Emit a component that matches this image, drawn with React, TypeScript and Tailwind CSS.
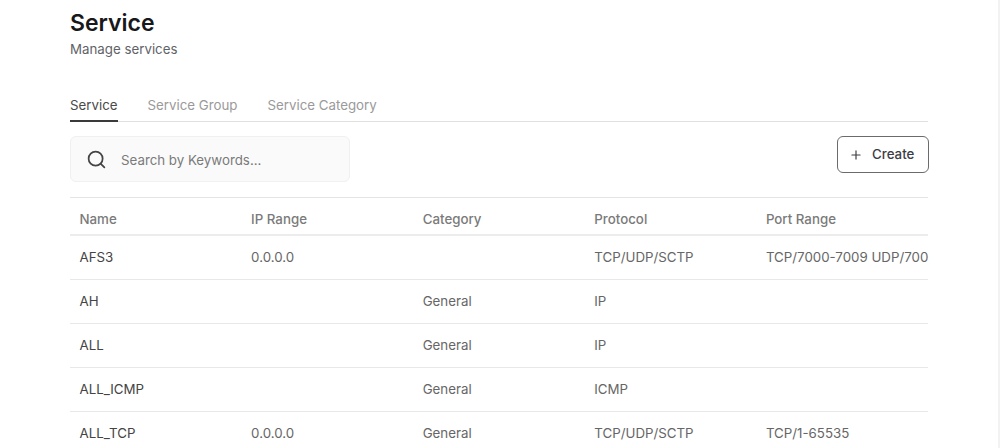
import React from 'react';
import { Plus, Search } from 'lucide-react';

const rows = [
  { name: 'AFS3', ip: '0.0.0.0', category: '', protocol: 'TCP/UDP/SCTP', port: 'TCP/7000-7009 UDP/700' },
  { name: 'AH', ip: '', category: 'General', protocol: 'IP', port: '' },
  { name: 'ALL', ip: '', category: 'General', protocol: 'IP', port: '' },
  { name: 'ALL_ICMP', ip: '', category: 'General', protocol: 'ICMP', port: '' },
  { name: 'ALL_TCP', ip: '0.0.0.0', category: 'General', protocol: 'TCP/UDP/SCTP', port: 'TCP/1-65535' },
];

const App = () => {
  return (
    <div className="h-[448px] w-[1000px] overflow-hidden bg-white font-['Inter',sans-serif]">
      <div className="flex h-full">
        <div className="w-[998px] pl-[70px] pr-[70px] pt-[8px]">
          {/* Header */}
          <h1 className="text-[23px] leading-[30px] font-semibold text-[#18181b]">Service</h1>
          <p className="mt-[2px] text-[13.3px] leading-[18px] text-[#5f6368]">Manage services</p>

          {/* Tabs */}
          <div className="mt-[35px] flex gap-[30px] border-b border-[#e0e0e0] text-[13.3px]">
            <div className="-mb-px h-[29px] border-b-2 border-[#3a3a3a] pt-[3px] leading-[18px] text-[#4a4a4a]">Service</div>
            <div className="pt-[3px] leading-[18px] text-[#9a9a9a]">Service Group</div>
            <div className="pt-[3px] leading-[18px] text-[#9a9a9a]">Service Category</div>
          </div>

          {/* Toolbar */}
          <div className="mt-[14px] flex h-[61px] items-start justify-between">
            <div className="flex h-[46px] w-[280px] items-center rounded-md border border-[#f0f0f0] bg-[#fafafa] pl-[15px]">
              <Search size={21} strokeWidth={2} className="mt-px text-[#444444]" />
              <span className="ml-[14px] mt-[4px] text-[13.3px] text-[#7a7a7a]">Search by Keywords...</span>
            </div>
            <button className="-mr-px flex h-[37px] w-[92px] items-center gap-[9px] rounded-md border border-[#6b6b6b] bg-white pl-[11px] text-[13.3px] font-medium text-[#3c3c43]">
              <Plus size={14} strokeWidth={2} />
              Create
            </button>
          </div>

          {/* Table */}
          <div className="border-t border-[#e4e4e4] text-[13.3px]">
            <div className="grid h-[38px] grid-cols-5 items-center border-b-2 border-[#ececec] pt-[8px] font-medium text-[#7a7a7a]">
              <div className="pl-[9.5px]">Name</div>
              <div className="pl-[9.5px]">IP Range</div>
              <div className="pl-[9.5px]">Category</div>
              <div className="pl-[9.5px]">Protocol</div>
              <div className="pl-[9.5px]">Port Range</div>
            </div>
            {rows.map((row) => (
              <div key={row.name} className="grid h-[44px] grid-cols-5 items-center border-b border-[#e8e8e8] text-[#666666]">
                <div className="pl-[9.5px] text-[#444444]">{row.name}</div>
                <div className="pl-[9.5px]">{row.ip}</div>
                <div className="pl-[9.5px]">{row.category}</div>
                <div className="pl-[9.5px]">{row.protocol}</div>
                <div className="whitespace-nowrap pl-[9.5px]">{row.port}</div>
              </div>
            ))}
          </div>
        </div>
        <div className="w-[2px] bg-[#f2f2f2]" />
      </div>
    </div>
  );
};

export default App;
